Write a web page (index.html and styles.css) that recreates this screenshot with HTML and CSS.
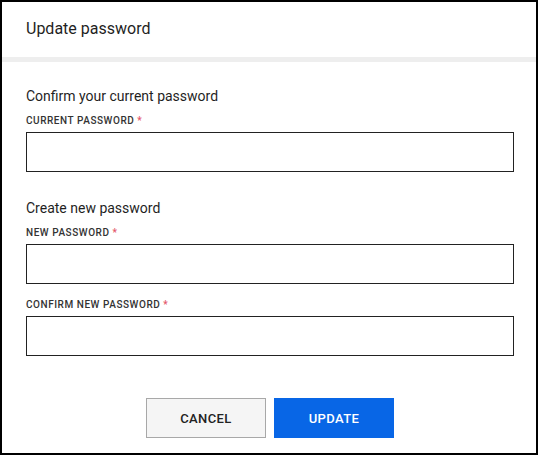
FILE: index.html
```html
<!DOCTYPE html>
<html>
<head>
<meta charset="utf-8">
<link rel="stylesheet" href="styles.css">
</head>
<body>
<div class="dialog">
  <div class="header">Update password</div>
  <div class="content">
    <div class="section-title">Confirm your current password</div>
    <label class="label">CURRENT PASSWORD <span class="req">*</span></label>
    <div class="input"></div>
    <div class="section-title second">Create new password</div>
    <label class="label">NEW PASSWORD <span class="req">*</span></label>
    <div class="input"></div>
    <label class="label gap">CONFIRM NEW PASSWORD <span class="req">*</span></label>
    <div class="input"></div>
  </div>
  <div class="actions">
    <button class="btn cancel">CANCEL</button>
    <button class="btn update">UPDATE</button>
  </div>
</div>
</body>
</html>
```
FILE: styles.css
```css
html, body { margin: 0; padding: 0; background: #fff; }
body { font-family: Roboto, "Noto Sans", sans-serif; color: #222; }
.dialog {
  width: 538px; height: 455px; box-sizing: border-box;
  border: 2px solid #000; display: flex; flex-direction: column;
}
.header {
  height: 60px; box-sizing: border-box; padding: 17px 24px 0;
  font-size: 16px; line-height: 20px; color: #1f1f1f;
  border-bottom: 5px solid #eeeeee;
}
.content { padding: 24px 22px 0 24px; display: flex; flex-direction: column; }
.section-title { font-size: 14px; line-height: 20px; color: #1f1f1f; }
.section-title.second { margin-top: 26px; }
.label {
  display: block; margin-top: 9px; font-size: 10px; line-height: 12px;
  font-weight: 500; letter-spacing: 0.55px; color: #333;
}
.label.gap { margin-top: 15px; }
.req { color: #e4566a; }
.input {
  margin-top: 5px; height: 40px; box-sizing: border-box;
  border: 1px solid #222; background: #fff;
}
.actions {
  margin-top: auto; padding: 0 0 15px 2px;
  display: flex; justify-content: center; gap: 8px;
}
.btn {
  width: 120px; height: 40px; box-sizing: border-box;
  font-family: Roboto, sans-serif; font-size: 13px; font-weight: 500;
  letter-spacing: 0.4px; cursor: pointer;
}
.cancel { background: #f5f5f5; border: 1px solid #a8a8a8; color: #222; }
.update { background: #0866e6; border: 1px solid #0866e6; color: #fff; }
```
